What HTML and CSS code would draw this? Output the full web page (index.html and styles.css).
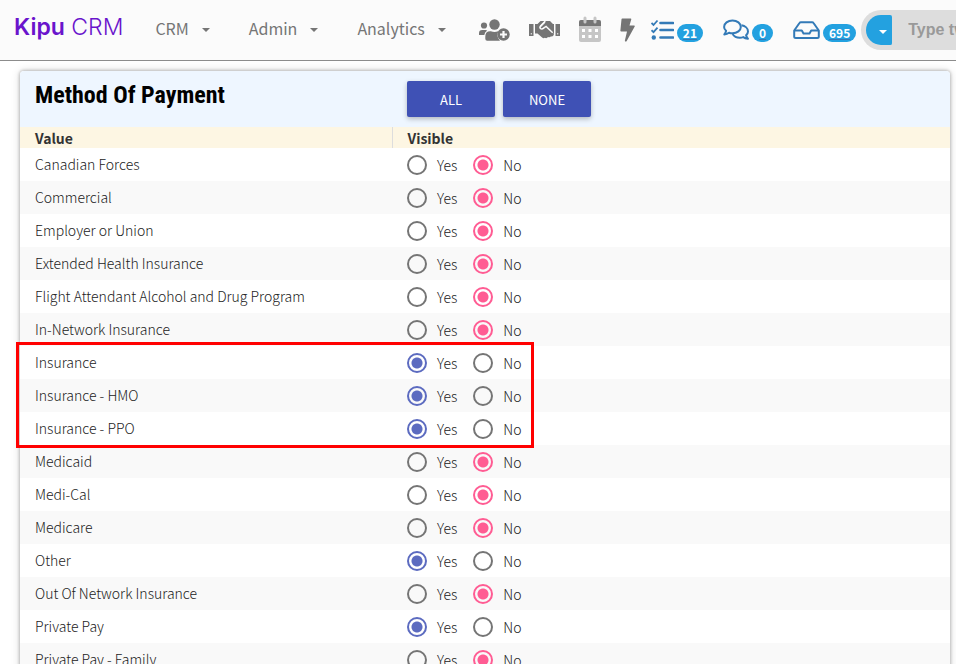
FILE: index.html
```html
<!DOCTYPE html>
<html lang="en">
<head>
    <meta charset="UTF-8">
    <meta name="viewport" content="width=device-width, initial-scale=1.0">
    <title>Kipu CRM - Method Of Payment</title>
    <link rel="stylesheet" href="styles.css">
</head>
<body>
    <header class="navbar">
        <a class="brand" href="#"><b>Kipu</b> CRM</a>
        <nav class="menu">
            <button type="button" class="menu-item">CRM <span class="caret"></span></button>
            <button type="button" class="menu-item">Admin <span class="caret"></span></button>
            <button type="button" class="menu-item">Analytics <span class="caret"></span></button>
        </nav>
        <div class="tools">
            <a class="tool" href="#" aria-label="Add contact">
                <svg width="31" height="24" viewBox="0 0 31 24" fill="currentColor">
                    <circle cx="5" cy="7.5" r="3.1"/>
                    <path d="M0 17v-1.700q0-3.300 3.300-3.300h3.200q1 0 1.700.5Q5.600 14 5.300 17z"/>
                    <circle cx="15.500" cy="6.500" r="5.200"/>
                    <path d="M6.300 20.800v-2.300q0-5.200 5-5.200h.6q3.600 1.500 7.200 0h.4q-2.900 4.900 1.500 9.400H8.200q-1.900 0-1.900-1.900z"/>
                    <circle cx="24.500" cy="16.500" r="6.200"/>
                    <path d="M24.500 13v7M21 16.500h7" stroke="#fbfbfb" stroke-width="2.200" fill="none"/>
                </svg>
            </a>
            <a class="tool" href="#" aria-label="Referrals">
                <svg width="31" height="24" viewBox="0 0 31 24" fill="currentColor">
                    <path d="M0 6h4.500v12H0zM26.500 6H31v12h-4.500z"/>
                    <path d="M6 6h2.500l3-3h3.800l-4.300 4.500q-1.200 2 .8 3 2 .7 3.400-1l1.900-1.400 7.300 6.900q1.200 1.500-.2 2.800-1 .9-2.200.4-1 1.700-2.900.9-1.600 1.700-3.300.6-1.200 1.100-2.700-.3L8.500 15.500H6z"/>
                    <path d="M17 3h4l3 3h1v9.500h-.8l-7-6.700-.6-.3-3.400 2.300q-1.200.6-1.700-.1-.6-.8.200-1.600z"/>
                    <path d="M16 4l-4.800 4.600q-.8 1.200.4 2 1.500.8 3-.5l2.500-1.700 6.600 6.300" stroke="#fbfbfb" stroke-width="1.500" fill="none"/>
                    <path d="M1.800 15.700h.9M28.300 15.700h.9" stroke="#fbfbfb" stroke-width="1.400"/>
                </svg>
            </a>
            <a class="tool" href="#" aria-label="Calendar">
                <svg width="22" height="28" viewBox="0 0 22 28">
                    <rect x="0" y="4" width="22" height="22" rx="2" fill="#c6c6c6"/>
                    <path d="M0 10V6q0-2 2-2h18q2 0 2 2v4z" fill="#757575"/>
                    <path d="M6 2v4M16 2v4" stroke="#c6c6c6" stroke-width="3" stroke-linecap="round"/>
                    <path d="M3 14.500h16M3 20.500h16" stroke="#fff" stroke-width="3" stroke-dasharray="3 3.500"/>
                </svg>
            </a>
            <a class="tool" href="#" aria-label="Quick actions">
                <svg width="15" height="24" viewBox="0 0 15 24" fill="currentColor">
                    <path d="M2.200.5h8.600q.7 0 .5.700L9.500 7.500h4.700q1 0 .5 1L6.700 23q-.5.900-1.400.5-.6-.3-.4-1L7 13.500H1.200Q.3 13.500.4 12.500L1.500 1.200Q1.600.5 2.200.5z"/>
                </svg>
            </a>
        </div>
        <div class="counters">
            <a class="tool counted" href="#" aria-label="Tasks">
                <svg width="23" height="22" viewBox="0 0 23 22" fill="none" stroke="currentColor">
                    <path d="M.5 4l2 2L6.500 1.500M.5 11.200l2 2 4-4.500" stroke-width="1.800"/>
                    <path d="M9.500 4H22M9.500 11H22M9.500 18.500H22" stroke-width="2.600" stroke-linecap="round"/>
                    <circle cx="2.800" cy="18.500" r="2.200" fill="currentColor" stroke="none"/>
                </svg>
                <span class="badge">21</span>
            </a>
            <a class="tool counted" href="#" aria-label="Messages">
                <svg width="26" height="22" viewBox="0 0 26 22" fill="none" stroke="currentColor" stroke-width="2" stroke-linejoin="round">
                    <path d="M9.500 1.500c4.700 0 8.300 2.900 8.300 6.400s-3.600 6.400-8.300 6.400q-1.900 0-3.500-.6-1.900 1.400-4.700 1.700 1.400-1.500 1.800-3.600-2-1.700-2-3.900c0-3.500 3.700-6.400 8.400-6.400z"/>
                    <path d="M18.500 6.300c3.700.6 6.500 3.100 6.500 6.200q0 2.100-1.900 3.800.4 2 1.800 3.400-2.800-.2-4.700-1.600-1.500.6-3.400.6c-3.200 0-5.900-1.500-7.200-3.700"/>
                </svg>
                <span class="badge">0</span>
            </a>
            <a class="tool counted" href="#" aria-label="Inbox">
                <svg width="27" height="20" viewBox="0 0 27 20" fill="none" stroke="currentColor" stroke-width="2" stroke-linejoin="round">
                    <path d="M1.200 10.500L6.500 3q.5-.8 1.400-.8h11.200q.9 0 1.400.8l5.300 7.500v6q0 1.500-1.500 1.500H2.700q-1.500 0-1.500-1.500z"/>
                    <path d="M1.500 10.500h7.300l1.700 3h6l1.700-3h7.300"/>
                </svg>
                <span class="badge">695</span>
            </a>
        </div>
        <form class="search" role="search">
            <button type="button" class="search-type" aria-label="Search type"><span class="caret"></span></button>
            <input type="text" class="search-box" aria-label="Search" placeholder="Type two or more letters">
        </form>
    </header>

    <main class="card">
        <div class="card-header">
            <h1>Method Of Payment</h1>
            <div class="card-actions">
                <button type="button" class="btn">ALL</button>
                <button type="button" class="btn">NONE</button>
            </div>
        </div>
        <table class="values">
            <thead>
                <tr><th scope="col">Value</th><th scope="col">Visible</th></tr>
            </thead>
            <tbody>
                <tr>
                    <td>Canadian Forces</td>
                    <td><div class="choices"><label><input type="radio" class="yes" name="v1">Yes</label><label><input type="radio" class="no" name="v1" checked>No</label></div></td>
                </tr>
                <tr>
                    <td>Commercial</td>
                    <td><div class="choices"><label><input type="radio" class="yes" name="v2">Yes</label><label><input type="radio" class="no" name="v2" checked>No</label></div></td>
                </tr>
                <tr>
                    <td>Employer or Union</td>
                    <td><div class="choices"><label><input type="radio" class="yes" name="v3">Yes</label><label><input type="radio" class="no" name="v3" checked>No</label></div></td>
                </tr>
                <tr>
                    <td>Extended Health Insurance</td>
                    <td><div class="choices"><label><input type="radio" class="yes" name="v4">Yes</label><label><input type="radio" class="no" name="v4" checked>No</label></div></td>
                </tr>
                <tr>
                    <td>Flight Attendant Alcohol and Drug Program</td>
                    <td><div class="choices"><label><input type="radio" class="yes" name="v5">Yes</label><label><input type="radio" class="no" name="v5" checked>No</label></div></td>
                </tr>
                <tr>
                    <td>In-Network Insurance</td>
                    <td><div class="choices"><label><input type="radio" class="yes" name="v6">Yes</label><label><input type="radio" class="no" name="v6" checked>No</label></div></td>
                </tr>
            </tbody>
            <tbody class="highlight">
                <tr>
                    <td>Insurance</td>
                    <td><div class="choices"><label><input type="radio" class="yes" name="v7" checked>Yes</label><label><input type="radio" class="no" name="v7">No</label></div></td>
                </tr>
                <tr>
                    <td>Insurance - HMO</td>
                    <td><div class="choices"><label><input type="radio" class="yes" name="v8" checked>Yes</label><label><input type="radio" class="no" name="v8">No</label></div></td>
                </tr>
                <tr>
                    <td>Insurance - PPO</td>
                    <td><div class="choices"><label><input type="radio" class="yes" name="v9" checked>Yes</label><label><input type="radio" class="no" name="v9">No</label></div></td>
                </tr>
            </tbody>
            <tbody class="shifted">
                <tr>
                    <td>Medicaid</td>
                    <td><div class="choices"><label><input type="radio" class="yes" name="v10">Yes</label><label><input type="radio" class="no" name="v10" checked>No</label></div></td>
                </tr>
                <tr>
                    <td>Medi-Cal</td>
                    <td><div class="choices"><label><input type="radio" class="yes" name="v11">Yes</label><label><input type="radio" class="no" name="v11" checked>No</label></div></td>
                </tr>
                <tr>
                    <td>Medicare</td>
                    <td><div class="choices"><label><input type="radio" class="yes" name="v12">Yes</label><label><input type="radio" class="no" name="v12" checked>No</label></div></td>
                </tr>
                <tr>
                    <td>Other</td>
                    <td><div class="choices"><label><input type="radio" class="yes" name="v13" checked>Yes</label><label><input type="radio" class="no" name="v13">No</label></div></td>
                </tr>
                <tr>
                    <td>Out Of Network Insurance</td>
                    <td><div class="choices"><label><input type="radio" class="yes" name="v14">Yes</label><label><input type="radio" class="no" name="v14" checked>No</label></div></td>
                </tr>
                <tr>
                    <td>Private Pay</td>
                    <td><div class="choices"><label><input type="radio" class="yes" name="v15" checked>Yes</label><label><input type="radio" class="no" name="v15">No</label></div></td>
                </tr>
                <tr>
                    <td>Private Pay - Family</td>
                    <td><div class="choices"><label><input type="radio" class="yes" name="v16">Yes</label><label><input type="radio" class="no" name="v16" checked>No</label></div></td>
                </tr>
            </tbody>
        </table>
    </main>
</body>
</html>
```

FILE: styles.css
```css
* {
    box-sizing: border-box;
}

body {
    margin: 0;
    overflow-x: hidden;
    background: #fff;
    color: #222;
    font-family: "Noto Sans CJK SC", "Noto Sans", sans-serif;
    font-size: 14px;
    font-weight: 300;
    line-height: 20px;
}

button,
input {
    font-family: inherit;
}

/* top bar */
.navbar {
    display: flex;
    align-items: center;
    height: 61px;
    padding-left: 14px;
    background: #fbfbfb;
    border-bottom: 1px solid #8c8c8c;
    overflow: hidden;
    white-space: nowrap;
}

.brand {
    flex: none;
    margin-right: 32px;
    padding-bottom: 6px;
    color: #6a14cc;
    font-family: Inter, sans-serif;
    font-size: 23px;
    font-weight: 300;
    line-height: 30px;
    text-decoration: none;
}

.brand b {
    font-weight: 600;
}

.menu {
    display: flex;
    flex: none;
    gap: 39px;
    margin-right: 33px;
}

.menu-item {
    display: flex;
    align-items: center;
    gap: 13px;
    padding: 0 0 4px;
    border: none;
    background: none;
    color: #757575;
    font-size: 16px;
    line-height: 24px;
    cursor: pointer;
}

.caret {
    width: 8px;
    margin-top: 3px;
    border-top: 4px solid;
    border-left: 4px solid transparent;
    border-right: 4px solid transparent;
}

.tools,
.counters {
    display: flex;
    flex: none;
    align-items: center;
}

.tools {
    gap: 19px;
    margin-right: 16px;
}

.counters {
    gap: 20px;
    margin-right: 5px;
}

.tool {
    display: flex;
    align-items: center;
    color: #757575;
}

.counted {
    gap: 3px;
    color: #337ab7;
}

.badge {
    min-width: 21px;
    margin-top: 6px;
    padding: 0 6px;
    border-radius: 9px;
    background: #23a1e0;
    color: #fff;
    font-size: 12px;
    font-weight: bold;
    line-height: 18px;
    text-align: center;
}

.search {
    display: flex;
    flex: none;
    width: 300px;
    height: 40px;
    padding: 5px;
    border-radius: 20px;
    background: #ddd;
}

.search-type {
    display: flex;
    align-items: center;
    justify-content: center;
    width: 26px;
    padding: 0 0 0 8px;
    border: none;
    border-radius: 16px 2px 2px 16px;
    background: #23a1e0;
    color: #fff;
}

.search-box {
    flex: 1;
    padding: 0 16px;
    border: none;
    background: none;
    font-family: "Liberation Sans", Arial, sans-serif;
    font-size: 16px;
    font-weight: bold;
}

.search-box::placeholder {
    color: #999;
}

/* payment card */
.card {
    margin: 10px 6px 20px 20px;
    border-radius: 4px;
    background: #fff;
    box-shadow: 0 0 3px 1px rgba(0, 0, 0, 0.2), 0 0 10px rgba(0, 0, 0, 0.15);
}

.card-header {
    display: flex;
    align-items: flex-start;
    height: 56px;
    padding-top: 10px;
    border-radius: 4px 4px 0 0;
    background: #eef6ff;
}

.card-header h1 {
    width: 40%;
    margin: 0;
    padding-left: 15px;
    color: #000;
    font-family: "Liberation Sans Narrow", "Roboto Condensed", sans-serif;
    font-size: 24px;
    line-height: 28px;
}

.card-actions {
    display: flex;
    gap: 8px;
    padding-left: 15px;
}

.btn {
    width: 88px;
    height: 36px;
    border: none;
    border-radius: 2px;
    background: #3f51b5;
    color: #fff;
    font-size: 13px;
    font-weight: 400;
    box-shadow: 0 2px 5px rgba(0, 0, 0, 0.26);
    cursor: pointer;
}

.values {
    width: 100%;
    border-collapse: collapse;
    table-layout: fixed;
}

.values th {
    height: 21px;
    padding: 0 15px;
    background: #fdf6e3;
    color: #333;
    text-align: left;
}

.values th:first-child {
    width: 40%;
    border-right: 1px solid #ddd;
}

.values td {
    height: 33px;
    padding: 0 15px;
}

.values td:first-child {
    padding-bottom: 2px;
}

.values tbody tr:nth-child(even),
.values .shifted tr:nth-child(odd) {
    background: #f9f9f9;
}

.values .shifted tr:nth-child(even) {
    background: #fff;
}

.highlight {
    position: relative;
}

/* red frame round the insurance rows */
.highlight::after {
    content: "";
    position: absolute;
    top: -4px;
    bottom: -3px;
    left: -4px;
    width: 512px;
    border: 3px solid #f00;
    pointer-events: none;
}

.choices {
    display: flex;
    gap: 16px;
}

.choices label {
    display: flex;
    align-items: center;
    gap: 10px;
    padding-top: 1px;
}

.choices input {
    appearance: none;
    width: 20px;
    height: 20px;
    margin: 0;
    border: 2px solid #757575;
    border-radius: 50%;
}

.choices .yes:checked {
    border-color: #5c6bc0;
    background: radial-gradient(circle, #5c6bc0 5px, transparent 6px);
}

.choices .no:checked {
    border-color: #ff5c93;
    background: radial-gradient(circle, #ff5c93 5px, transparent 6px);
}
```
